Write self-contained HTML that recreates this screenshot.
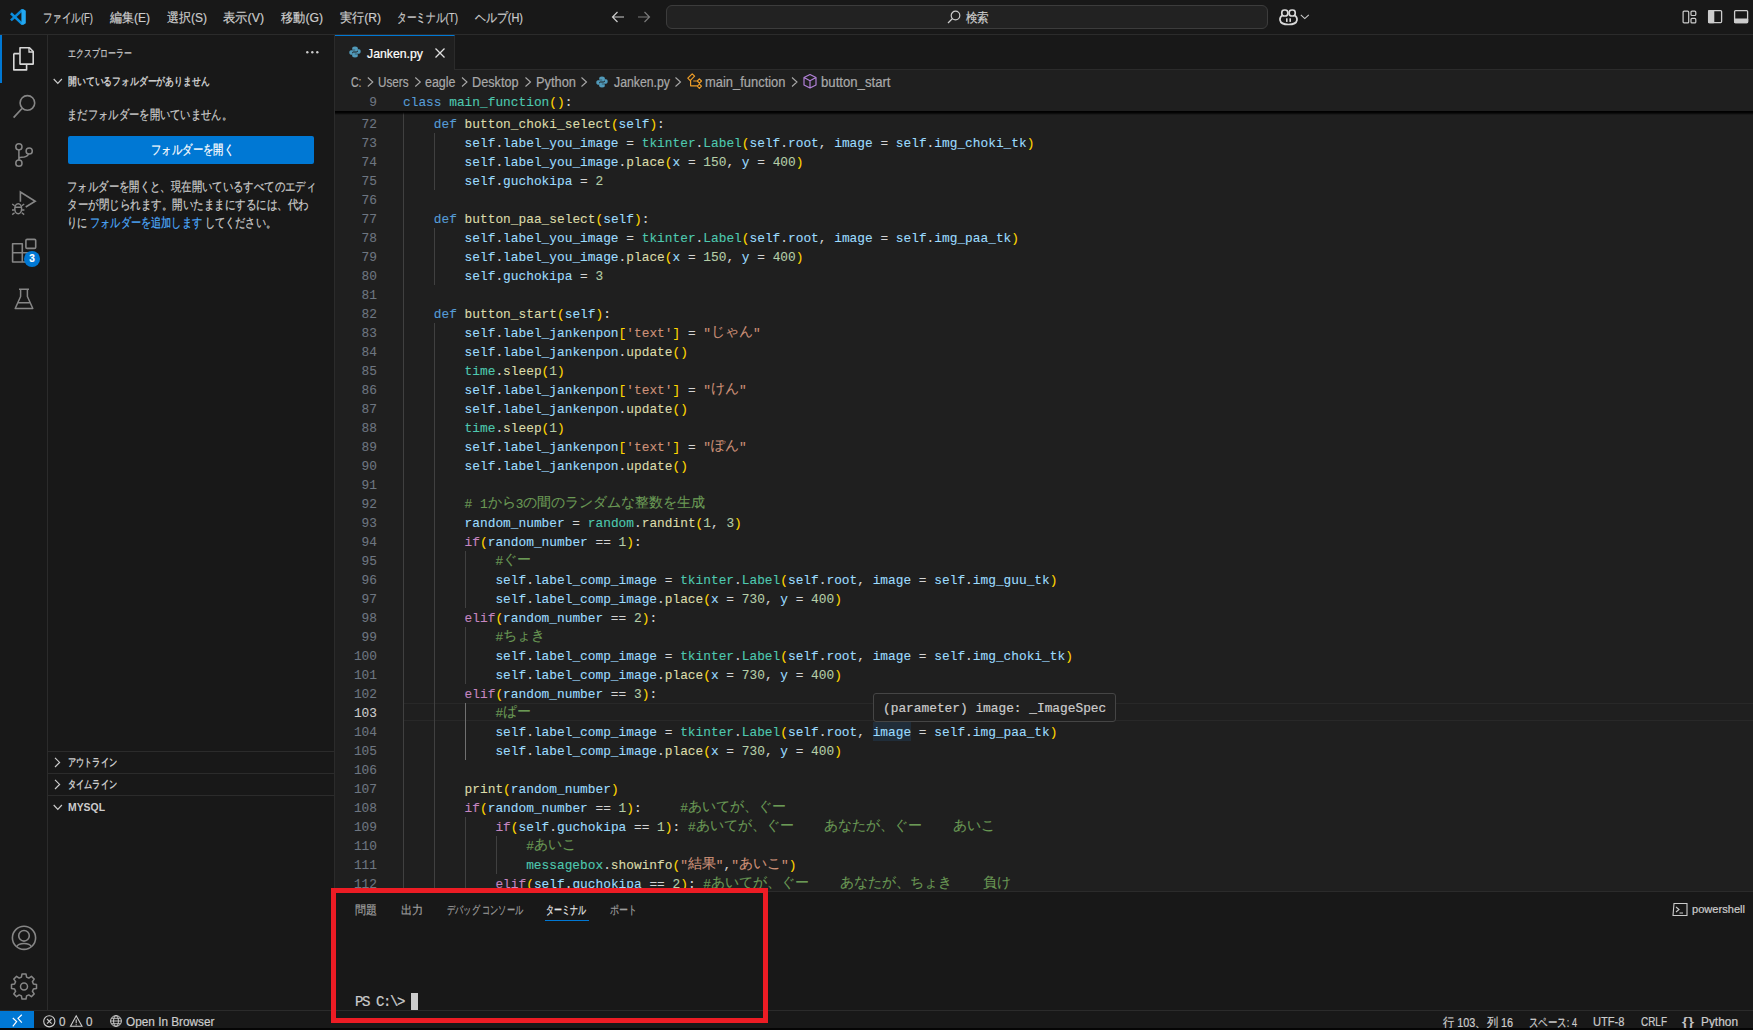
<!DOCTYPE html>
<html lang="ja">
<head>
<meta charset="utf-8">
<style>
*{box-sizing:border-box}
html,body{margin:0;padding:0;width:1753px;height:1030px;overflow:hidden;background:#181818;font-family:"Liberation Sans",sans-serif;color:#cccccc;-webkit-text-stroke:0.2px}
.a{position:absolute;white-space:pre}
#title{position:absolute;left:0;top:0;width:1753px;height:35px;background:#181818;border-bottom:1px solid #2b2b2b}
.menu{position:absolute;top:9px;font-size:13px;color:#cccccc}
#act{position:absolute;left:0;top:35px;width:48px;height:975px;background:#181818;border-right:1px solid #2b2b2b}
#side{position:absolute;left:48px;top:35px;width:287px;height:975px;background:#181818;border-right:1px solid #2b2b2b}
#tabs{position:absolute;left:335px;top:35px;width:1418px;height:35px;background:#181818;border-bottom:1px solid #2b2b2b}
#editor{position:absolute;left:335px;top:70px;width:1418px;height:821px;background:#1f1f1f;overflow:hidden}
.cl{position:absolute;left:403px;height:19px;line-height:19px;font-family:"Liberation Mono",monospace;font-size:12.83px;white-space:pre;color:#d4d4d4;-webkit-text-stroke:0.1px}
.ln{position:absolute;left:334px;width:43px;text-align:right;height:19px;line-height:19px;font-family:"Liberation Mono",monospace;font-size:12.83px;color:#6e7681;-webkit-text-stroke:0.1px}
.ln.cur{color:#cccccc}
.j{font-size:14px;position:relative;top:-1px}
.ig{position:absolute;width:1px;background:#404040}
.ig.act{background:#707070}
#panel{position:absolute;left:335px;top:891px;width:1418px;height:119px;background:#181818;border-top:1px solid #2b2b2b}
#status{position:absolute;left:0;top:1010px;width:1753px;height:20px;background:#181818;border-top:1px solid #2b2b2b}
.ptab{position:absolute;top:903px;font-size:11.5px;color:#9d9d9d}
.sb{position:absolute;top:1015px;font-size:12.5px;color:#cccccc}
.bc{position:absolute;top:74px;font-size:14px;color:#a9a9a9}
.sec{position:absolute;font-size:11px;font-weight:bold;color:#cccccc;-webkit-text-stroke:0}
svg{position:absolute;overflow:visible}
</style>
</head>
<body>
<!-- TITLE BAR -->
<div id="title"></div>
<svg style="left:0;top:0" width="34" height="34" viewBox="0 0 34 34">
  <path d="M21.4 10.8 L11.9 19.5" stroke="#0a87d6" stroke-width="2.6" stroke-linecap="square"/>
  <path d="M11.9 14.2 L21.4 23.2" stroke="#0b8fe0" stroke-width="2.6" stroke-linecap="square"/>
  <path d="M21.4 9.4 L23 9.1 L25.8 10.7 V23.3 L23 24.9 L21.4 24.6 Z" fill="#22a8f2"/>
</svg>
<div class="a menu" style="left:43px;transform:scaleX(0.7288);transform-origin:0 0">ファイル(F)</div>
<div class="a menu" style="left:110px;transform:scaleX(0.9229);transform-origin:0 0">編集(E)</div>
<div class="a menu" style="left:167px;transform:scaleX(0.9229);transform-origin:0 0">選択(S)</div>
<div class="a menu" style="left:223px;transform:scaleX(0.9459);transform-origin:0 0">表示(V)</div>
<div class="a menu" style="left:281px;transform:scaleX(0.9379);transform-origin:0 0">移動(G)</div>
<div class="a menu" style="left:340px;transform:scaleX(0.9308);transform-origin:0 0">実行(R)</div>
<div class="a menu" style="left:397px;transform:scaleX(0.7475);transform-origin:0 0">ターミナル(T)</div>
<div class="a menu" style="left:475px;transform:scaleX(0.8414);transform-origin:0 0">ヘルプ(H)</div>
<!-- nav arrows -->
<svg style="left:611px;top:10px" width="14" height="14" viewBox="0 0 14 14"><path d="M13 7 H1.5 M6.5 2 L1.5 7 L6.5 12" stroke="#cccccc" stroke-width="1.2" fill="none"/></svg>
<svg style="left:637px;top:10px" width="14" height="14" viewBox="0 0 14 14"><path d="M1 7 H12.5 M7.5 2 L12.5 7 L7.5 12" stroke="#7a7a7a" stroke-width="1.2" fill="none"/></svg>
<!-- search box -->
<div class="a" style="left:666px;top:5px;width:602px;height:24px;background:#222222;border:1px solid #3c3c3c;border-radius:6px"></div>
<svg style="left:947px;top:10px" width="14" height="14" viewBox="0 0 14 14"><circle cx="8.5" cy="5.5" r="4.3" stroke="#cccccc" stroke-width="1.2" fill="none"/><path d="M5.5 8.5 L1 13" stroke="#cccccc" stroke-width="1.3"/></svg>
<div class="a" style="left:966px;top:10px;font-size:12.5px;color:#cccccc;transform:scaleX(0.8846);transform-origin:0 0">検索</div>
<!-- copilot -->
<svg style="left:1279px;top:9px" width="19" height="16" viewBox="0 0 19 16">
  <path d="M3.2 6.5 C1.5 7.5 0.8 9 1 11 C1.5 14 4.5 15.5 9.5 15.5 C14.5 15.5 17.5 14 18 11 C18.2 9 17.5 7.5 15.8 6.5" fill="none" stroke="#d8d8d8" stroke-width="1.7"/>
  <rect x="2.8" y="1" width="6" height="6" rx="2.6" fill="none" stroke="#d8d8d8" stroke-width="1.7"/>
  <rect x="10.2" y="1" width="6" height="6" rx="2.6" fill="none" stroke="#d8d8d8" stroke-width="1.7"/>
  <rect x="7" y="9.3" width="1.6" height="3.6" fill="#d8d8d8"/><rect x="10.4" y="9.3" width="1.6" height="3.6" fill="#d8d8d8"/>
</svg>
<svg style="left:1300px;top:14px" width="10" height="6" viewBox="0 0 10 6"><path d="M0.8 0.8 L4.8 4.6 L8.8 0.8" stroke="#cccccc" stroke-width="1.1" fill="none"/></svg>
<!-- layout icons -->
<svg style="left:1682px;top:10px" width="15" height="14" viewBox="0 0 15 14"><rect x="1.1" y="1.2" width="5.6" height="11.7" rx="1" fill="none" stroke="#cccccc" stroke-width="1.2"/><rect x="9" y="1.2" width="4.8" height="4.3" rx="1" fill="none" stroke="#cccccc" stroke-width="1.2"/><rect x="9" y="8.4" width="4.8" height="4.5" rx="1" fill="none" stroke="#cccccc" stroke-width="1.2"/></svg>
<svg style="left:1707px;top:9px" width="16" height="15" viewBox="0 0 16 15"><rect x="1.6" y="1.6" width="13" height="12" rx="1" fill="none" stroke="#cccccc" stroke-width="1.3"/><rect x="1" y="1" width="6.3" height="13.2" rx="1" fill="#cccccc"/></svg>
<svg style="left:1733px;top:9px" width="16" height="15" viewBox="0 0 16 15"><rect x="1.6" y="1.6" width="13" height="12" rx="1" fill="none" stroke="#cccccc" stroke-width="1.3"/><rect x="1" y="9.5" width="14.2" height="4.8" rx="1" fill="#cccccc"/></svg>

<!-- ACTIVITY BAR -->
<div id="act"></div>
<div class="a" style="left:0;top:35px;width:2px;height:48px;background:#0078d4"></div>
<!-- explorer -->
<svg style="left:0;top:0" width="48" height="80" viewBox="0 0 48 80">
  <path d="M13.8 53.6 H19.5 M13.8 53.6 V69.9 H26.6 V65" fill="none" stroke="#d7d7d7" stroke-width="1.6" stroke-linejoin="round"/>
  <path d="M20 47.8 H29.5 L33.2 51.5 V64.1 H20 Z" fill="none" stroke="#d7d7d7" stroke-width="1.6" stroke-linejoin="round"/>
  <path d="M29 48 V52 H33" fill="none" stroke="#d7d7d7" stroke-width="1.3"/>
</svg>
<!-- search -->
<svg style="left:0;top:0" width="48" height="130" viewBox="0 0 48 130"><circle cx="27.4" cy="102.9" r="7.3" fill="none" stroke="#868686" stroke-width="1.6"/><path d="M22 108.5 L13.6 117.6" stroke="#868686" stroke-width="1.7"/></svg>
<!-- source control -->
<svg style="left:0;top:0" width="48" height="180" viewBox="0 0 48 180"><circle cx="18.9" cy="146.8" r="3.1" fill="none" stroke="#868686" stroke-width="1.5"/><circle cx="18.9" cy="163.2" r="3.1" fill="none" stroke="#868686" stroke-width="1.5"/><circle cx="29.2" cy="151" r="3.1" fill="none" stroke="#868686" stroke-width="1.5"/><path d="M18.9 149.9 V160.1 M28.5 154 C27.5 156.5 25 157.3 21.5 157.3 C20 157.3 18.9 158 18.9 159" fill="none" stroke="#868686" stroke-width="1.5"/></svg>
<!-- run debug -->
<svg style="left:0;top:0" width="48" height="230" viewBox="0 0 48 230"><path d="M20.4 201.8 V192 L35.2 201.2 L25.7 207" fill="none" stroke="#868686" stroke-width="1.6" stroke-linejoin="miter"/><ellipse cx="18.2" cy="208.8" rx="3.4" ry="5" fill="none" stroke="#868686" stroke-width="1.5"/><path d="M14.8 207.3 H21.6 M12.2 204 L14.6 205.8 M24.2 204 L21.8 205.8 M12 210 H14.6 M21.8 210 H24.4 M12.2 214.6 L14.6 212.8 M24.2 214.6 L21.8 212.8" stroke="#868686" stroke-width="1.4"/></svg>
<!-- extensions -->
<svg style="left:0;top:0" width="48" height="280" viewBox="0 0 48 280"><path d="M12.6 243.8 H22.3 V262 H12.6 Z M12.6 252.8 H31 M22.3 262 H30" fill="none" stroke="#868686" stroke-width="1.6" stroke-linejoin="round"/><rect x="25.9" y="239.4" width="9.8" height="9" rx="1.2" fill="none" stroke="#868686" stroke-width="1.6"/></svg>
<div class="a" style="left:24px;top:251px;width:16px;height:16px;border-radius:8px;background:#0078d4"></div>
<div class="a" style="left:24px;top:251px;width:16px;height:16px;color:#fff;font-size:10px;font-weight:bold;text-align:center;line-height:16px">3</div>
<!-- testing -->
<svg style="left:0;top:0" width="48" height="320" viewBox="0 0 48 320"><path d="M19 289.3 H29 M20.6 289.3 V296.5 L15.2 308.5 H32.8 L27.4 296.5 V289.3 M17.4 302.7 H30.6" fill="none" stroke="#868686" stroke-width="1.5" stroke-linejoin="round"/></svg>
<!-- account -->
<svg style="left:0;top:0" width="48" height="960" viewBox="0 0 48 960"><circle cx="24" cy="937.8" r="11.6" fill="none" stroke="#868686" stroke-width="1.6"/><circle cx="24" cy="935.8" r="5.3" fill="none" stroke="#868686" stroke-width="1.6"/><path d="M16.6 946.8 C18.5 942.3 29.5 942.3 31.4 946.8" fill="none" stroke="#868686" stroke-width="1.6"/></svg>
<!-- settings -->
<svg style="left:11px;top:973px" width="26" height="26" viewBox="0 0 26 26"><path d="M11 1 H15 L15.6 4.1 L17.8 5.1 L20.4 3.3 L23.2 6.1 L21.4 8.7 L22.4 10.9 L25.5 11.5 V15.5 L22.4 16.1 L21.4 18.3 L23.2 20.9 L20.4 23.7 L17.8 21.9 L15.6 22.9 L15 26 H11 L10.4 22.9 L8.2 21.9 L5.6 23.7 L2.8 20.9 L4.6 18.3 L3.6 16.1 L0.5 15.5 V11.5 L3.6 10.9 L4.6 8.7 L2.8 6.1 L5.6 3.3 L8.2 5.1 L10.4 4.1 Z" fill="none" stroke="#868686" stroke-width="1.5" stroke-linejoin="round"/><circle cx="13" cy="13.5" r="3.5" fill="none" stroke="#868686" stroke-width="1.5"/></svg>

<!-- SIDEBAR -->
<div id="side"></div>
<div class="a" style="left:68px;top:46px;font-size:11px;color:#cccccc;transform:scaleX(0.7216);transform-origin:0 0">エクスプローラー</div>
<svg style="left:306px;top:51px" width="13" height="3" viewBox="0 0 13 3"><circle cx="1.3" cy="1.3" r="1.2" fill="#cccccc"/><circle cx="6.3" cy="1.3" r="1.2" fill="#cccccc"/><circle cx="11.3" cy="1.3" r="1.2" fill="#cccccc"/></svg>
<svg style="left:53px;top:78px" width="10" height="7" viewBox="0 0 10 7"><path d="M0.7 1 L4.8 5.3 L8.9 1" stroke="#cccccc" stroke-width="1.2" fill="none"/></svg>
<div class="a sec" style="left:68px;top:74px;transform:scaleX(0.8040);transform-origin:0 0">開いているフォルダーがありません</div>
<div class="a" style="left:67px;top:106px;font-size:13px;color:#cccccc;transform:scaleX(0.7933);transform-origin:0 0">まだフォルダーを開いていません。</div>
<div class="a" style="left:68px;top:136px;width:246px;height:28px;background:#0078d4;border-radius:2px"></div>
<div class="a" style="left:151px;top:141px;font-size:13px;color:#ffffff;transform:scaleX(0.7981);transform-origin:0 0">フォルダーを開く</div>
<div class="a" style="left:67px;top:178px;font-size:13px;color:#cccccc;transform:scaleX(0.7981);transform-origin:0 0">フォルダーを開くと、現在開いているすべてのエディ</div>
<div class="a" style="left:67px;top:196px;font-size:13px;color:#cccccc;transform:scaleX(0.8077);transform-origin:0 0">ターが閉じられます。開いたままにするには、代わ</div>
<div class="a" style="left:67px;top:214px;font-size:13px;color:#cccccc;transform:scaleX(0.7820);transform-origin:0 0">りに <span style="color:#4daafc">フォルダーを追加します</span> してください。</div>
<!-- bottom sections -->
<div class="a" style="left:48px;top:751px;width:286px;height:1px;background:#2b2b2b"></div>
<svg style="left:54px;top:757px" width="8" height="11" viewBox="0 0 8 11"><path d="M1 0.8 L5.6 5.4 L1 10" stroke="#cccccc" stroke-width="1.2" fill="none"/></svg>
<div class="a sec" style="left:68px;top:755px;transform:scaleX(0.7424);transform-origin:0 0">アウトライン</div>
<div class="a" style="left:48px;top:773px;width:286px;height:1px;background:#2b2b2b"></div>
<svg style="left:54px;top:779px" width="8" height="11" viewBox="0 0 8 11"><path d="M1 0.8 L5.6 5.4 L1 10" stroke="#cccccc" stroke-width="1.2" fill="none"/></svg>
<div class="a sec" style="left:68px;top:777px;transform:scaleX(0.7424);transform-origin:0 0">タイムライン</div>
<div class="a" style="left:48px;top:795px;width:286px;height:1px;background:#2b2b2b"></div>
<svg style="left:53px;top:804px" width="10" height="7" viewBox="0 0 10 7"><path d="M0.7 1 L4.8 5.3 L8.9 1" stroke="#cccccc" stroke-width="1.2" fill="none"/></svg>
<div class="a sec" style="left:68px;top:801px;transform:scaleX(0.9457);transform-origin:0 0">MYSQL</div>

<!-- TABS -->
<div id="tabs"></div>
<div class="a" style="left:335px;top:35px;width:120px;height:35px;background:#1f1f1f;border-top:1px solid #0078d4;border-right:1px solid #2b2b2b"></div>
<svg style="left:349px;top:46px" width="12" height="12" viewBox="0 0 12 12"><path d="M6 0.5 C3.5 0.5 3.2 1.5 3.2 2.5 V3.8 H6.2 V4.3 H2 C0.8 4.3 0.3 5.3 0.3 6.5 C0.3 7.8 0.9 8.7 2 8.7 H3 V7.2 C3 6.2 3.8 5.5 4.7 5.5 H7.5 C8.3 5.5 8.9 4.9 8.9 4.1 V2.5 C8.9 1.4 8 0.5 6 0.5 Z" fill="#519aba"/><path d="M6 11.5 C8.5 11.5 8.8 10.5 8.8 9.5 V8.2 H5.8 V7.7 H10 C11.2 7.7 11.7 6.7 11.7 5.5 C11.7 4.2 11.1 3.3 10 3.3 H9 V4.8 C9 5.8 8.2 6.5 7.3 6.5 H4.5 C3.7 6.5 3.1 7.1 3.1 7.9 V9.5 C3.1 10.6 4 11.5 6 11.5 Z" fill="#519aba"/></svg>
<div class="a" style="left:367px;top:46px;font-size:13px;color:#ffffff;transform:scaleX(0.9449);transform-origin:0 0">Janken.py</div>
<svg style="left:435px;top:48px" width="10" height="10" viewBox="0 0 10 10"><path d="M0.5 0.5 L9.5 9.5 M9.5 0.5 L0.5 9.5" stroke="#e0e0e0" stroke-width="1.3"/></svg>

<!-- EDITOR -->
<div id="editor"></div>
<!-- breadcrumbs -->
<div class="a bc" style="left:351px;transform:scaleX(0.7500);transform-origin:0 0">C:</div>
<div class="a bc" style="left:378px;transform:scaleX(0.8342);transform-origin:0 0">Users</div>
<div class="a bc" style="left:425px;transform:scaleX(0.8901);transform-origin:0 0">eagle</div>
<div class="a bc" style="left:472px;transform:scaleX(0.9054);transform-origin:0 0">Desktop</div>
<div class="a bc" style="left:536px;transform:scaleX(0.9176);transform-origin:0 0">Python</div>
<div class="a bc" style="left:614px;transform:scaleX(0.8774);transform-origin:0 0">Janken.py</div>
<div class="a bc" style="left:705px;transform:scaleX(0.9235);transform-origin:0 0">main_function</div>
<div class="a bc" style="left:821px;transform:scaleX(0.9400);transform-origin:0 0">button_start</div>
<svg style="left:0;top:0" width="900" height="92" viewBox="0 0 900 92"><path d="M367.8 77.5 L372.8 82 L367.8 86.5 M415.3 77.5 L420.3 82 L415.3 86.5 M462 77.5 L467 82 L462 86.5 M525.5 77.5 L530.5 82 L525.5 86.5 M581.5 77.5 L586.5 82 L581.5 86.5 M675.5 77.5 L680.5 82 L675.5 86.5 M792 77.5 L797 82 L792 86.5" stroke="#a9a9a9" stroke-width="1.1" fill="none"/>
<path d="M687.8 78.2 L692.2 73.8 L694.6 76.2 L690.2 80.6 Z M697.3 81 L699.4 78.9 L701.5 81 L699.4 83.1 Z M697.3 86.2 L699.4 84.1 L701.5 86.2 L699.4 88.3 Z M690.6 80.2 V85.8 H697.3 M693.2 81 H697.3" stroke="#ee9d28" stroke-width="1.2" fill="none" stroke-linejoin="round"/>
<path d="M810 74.5 L816 77.5 V85 L810 88 L804 85 V77.5 Z M804 77.5 L810 80.8 L816 77.5 M810 80.8 V88" stroke="#b180d7" stroke-width="1.2" fill="none" stroke-linejoin="round"/>
</svg>
<svg style="left:596px;top:76px" width="12" height="12" viewBox="0 0 12 12"><path d="M6 0.5 C3.5 0.5 3.2 1.5 3.2 2.5 V3.8 H6.2 V4.3 H2 C0.8 4.3 0.3 5.3 0.3 6.5 C0.3 7.8 0.9 8.7 2 8.7 H3 V7.2 C3 6.2 3.8 5.5 4.7 5.5 H7.5 C8.3 5.5 8.9 4.9 8.9 4.1 V2.5 C8.9 1.4 8 0.5 6 0.5 Z" fill="#519aba"/><path d="M6 11.5 C8.5 11.5 8.8 10.5 8.8 9.5 V8.2 H5.8 V7.7 H10 C11.2 7.7 11.7 6.7 11.7 5.5 C11.7 4.2 11.1 3.3 10 3.3 H9 V4.8 C9 5.8 8.2 6.5 7.3 6.5 H4.5 C3.7 6.5 3.1 7.1 3.1 7.9 V9.5 C3.1 10.6 4 11.5 6 11.5 Z" fill="#519aba"/></svg>

<!-- current line -->
<div class="a" style="left:403px;top:703px;width:1350px;height:18px;border-top:1px solid #282828;border-bottom:1px solid #282828"></div>
<div class="ig" style="left:403px;top:112px;height:779px"></div><div class="ig" style="left:434px;top:133px;height:57px"></div><div class="ig" style="left:434px;top:228px;height:57px"></div><div class="ig" style="left:434px;top:323px;height:570px"></div><div class="ig" style="left:465px;top:551px;height:57px"></div><div class="ig" style="left:465px;top:627px;height:57px"></div><div class="ig" style="left:465px;top:817px;height:76px"></div><div class="ig act" style="left:465px;top:703px;height:57px"></div><div class="ig" style="left:496px;top:836px;height:38px"></div>
<!-- hover highlight on 'image' line 104 -->
<div class="a" style="left:873px;top:722px;width:38px;height:19px;background:rgba(38,79,120,0.3)"></div>
<div class="ln" style="top:115px">72</div><div class="ln" style="top:134px">73</div><div class="ln" style="top:153px">74</div><div class="ln" style="top:172px">75</div><div class="ln" style="top:191px">76</div><div class="ln" style="top:210px">77</div><div class="ln" style="top:229px">78</div><div class="ln" style="top:248px">79</div><div class="ln" style="top:267px">80</div><div class="ln" style="top:286px">81</div><div class="ln" style="top:305px">82</div><div class="ln" style="top:324px">83</div><div class="ln" style="top:343px">84</div><div class="ln" style="top:362px">85</div><div class="ln" style="top:381px">86</div><div class="ln" style="top:400px">87</div><div class="ln" style="top:419px">88</div><div class="ln" style="top:438px">89</div><div class="ln" style="top:457px">90</div><div class="ln" style="top:476px">91</div><div class="ln" style="top:495px">92</div><div class="ln" style="top:514px">93</div><div class="ln" style="top:533px">94</div><div class="ln" style="top:552px">95</div><div class="ln" style="top:571px">96</div><div class="ln" style="top:590px">97</div><div class="ln" style="top:609px">98</div><div class="ln" style="top:628px">99</div><div class="ln" style="top:647px">100</div><div class="ln" style="top:666px">101</div><div class="ln" style="top:685px">102</div><div class="ln cur" style="top:704px">103</div><div class="ln" style="top:723px">104</div><div class="ln" style="top:742px">105</div><div class="ln" style="top:761px">106</div><div class="ln" style="top:780px">107</div><div class="ln" style="top:799px">108</div><div class="ln" style="top:818px">109</div><div class="ln" style="top:837px">110</div><div class="ln" style="top:856px">111</div><div class="ln" style="top:875px">112</div>
<div class="cl" style="top:115px">    <span style="color:#569cd6">def</span> <span style="color:#dcdcaa">button_choki_select</span><span style="color:#ffd700">(</span><span style="color:#9cdcfe">self</span><span style="color:#ffd700">)</span><span style="color:#d4d4d4">:</span></div><div class="cl" style="top:134px">        <span style="color:#9cdcfe">self</span><span style="color:#d4d4d4">.</span><span style="color:#9cdcfe">label_you_image</span><span style="color:#d4d4d4"> = </span><span style="color:#4ec9b0">tkinter</span><span style="color:#d4d4d4">.</span><span style="color:#4ec9b0">Label</span><span style="color:#ffd700">(</span><span style="color:#9cdcfe">self</span><span style="color:#d4d4d4">.</span><span style="color:#9cdcfe">root</span><span style="color:#d4d4d4">, </span><span style="color:#9cdcfe">image</span><span style="color:#d4d4d4"> = </span><span style="color:#9cdcfe">self</span><span style="color:#d4d4d4">.</span><span style="color:#9cdcfe">img_choki_tk</span><span style="color:#ffd700">)</span></div><div class="cl" style="top:153px">        <span style="color:#9cdcfe">self</span><span style="color:#d4d4d4">.</span><span style="color:#9cdcfe">label_you_image</span><span style="color:#d4d4d4">.</span><span style="color:#dcdcaa">place</span><span style="color:#ffd700">(</span><span style="color:#9cdcfe">x</span><span style="color:#d4d4d4"> = </span><span style="color:#b5cea8">150</span><span style="color:#d4d4d4">, </span><span style="color:#9cdcfe">y</span><span style="color:#d4d4d4"> = </span><span style="color:#b5cea8">400</span><span style="color:#ffd700">)</span></div><div class="cl" style="top:172px">        <span style="color:#9cdcfe">self</span><span style="color:#d4d4d4">.</span><span style="color:#9cdcfe">guchokipa</span><span style="color:#d4d4d4"> = </span><span style="color:#b5cea8">2</span></div><div class="cl" style="top:191px"></div><div class="cl" style="top:210px">    <span style="color:#569cd6">def</span> <span style="color:#dcdcaa">button_paa_select</span><span style="color:#ffd700">(</span><span style="color:#9cdcfe">self</span><span style="color:#ffd700">)</span><span style="color:#d4d4d4">:</span></div><div class="cl" style="top:229px">        <span style="color:#9cdcfe">self</span><span style="color:#d4d4d4">.</span><span style="color:#9cdcfe">label_you_image</span><span style="color:#d4d4d4"> = </span><span style="color:#4ec9b0">tkinter</span><span style="color:#d4d4d4">.</span><span style="color:#4ec9b0">Label</span><span style="color:#ffd700">(</span><span style="color:#9cdcfe">self</span><span style="color:#d4d4d4">.</span><span style="color:#9cdcfe">root</span><span style="color:#d4d4d4">, </span><span style="color:#9cdcfe">image</span><span style="color:#d4d4d4"> = </span><span style="color:#9cdcfe">self</span><span style="color:#d4d4d4">.</span><span style="color:#9cdcfe">img_paa_tk</span><span style="color:#ffd700">)</span></div><div class="cl" style="top:248px">        <span style="color:#9cdcfe">self</span><span style="color:#d4d4d4">.</span><span style="color:#9cdcfe">label_you_image</span><span style="color:#d4d4d4">.</span><span style="color:#dcdcaa">place</span><span style="color:#ffd700">(</span><span style="color:#9cdcfe">x</span><span style="color:#d4d4d4"> = </span><span style="color:#b5cea8">150</span><span style="color:#d4d4d4">, </span><span style="color:#9cdcfe">y</span><span style="color:#d4d4d4"> = </span><span style="color:#b5cea8">400</span><span style="color:#ffd700">)</span></div><div class="cl" style="top:267px">        <span style="color:#9cdcfe">self</span><span style="color:#d4d4d4">.</span><span style="color:#9cdcfe">guchokipa</span><span style="color:#d4d4d4"> = </span><span style="color:#b5cea8">3</span></div><div class="cl" style="top:286px"></div><div class="cl" style="top:305px">    <span style="color:#569cd6">def</span> <span style="color:#dcdcaa">button_start</span><span style="color:#ffd700">(</span><span style="color:#9cdcfe">self</span><span style="color:#ffd700">)</span><span style="color:#d4d4d4">:</span></div><div class="cl" style="top:324px">        <span style="color:#9cdcfe">self</span><span style="color:#d4d4d4">.</span><span style="color:#9cdcfe">label_jankenpon</span><span style="color:#ffd700">[</span><span style="color:#ce9178">&#x27;text&#x27;</span><span style="color:#ffd700">]</span><span style="color:#d4d4d4"> = </span><span style="color:#ce9178">&quot;<span class="j">じゃん</span>&quot;</span></div><div class="cl" style="top:343px">        <span style="color:#9cdcfe">self</span><span style="color:#d4d4d4">.</span><span style="color:#9cdcfe">label_jankenpon</span><span style="color:#d4d4d4">.</span><span style="color:#dcdcaa">update</span><span style="color:#ffd700">(</span><span style="color:#ffd700">)</span></div><div class="cl" style="top:362px">        <span style="color:#4ec9b0">time</span><span style="color:#d4d4d4">.</span><span style="color:#dcdcaa">sleep</span><span style="color:#ffd700">(</span><span style="color:#b5cea8">1</span><span style="color:#ffd700">)</span></div><div class="cl" style="top:381px">        <span style="color:#9cdcfe">self</span><span style="color:#d4d4d4">.</span><span style="color:#9cdcfe">label_jankenpon</span><span style="color:#ffd700">[</span><span style="color:#ce9178">&#x27;text&#x27;</span><span style="color:#ffd700">]</span><span style="color:#d4d4d4"> = </span><span style="color:#ce9178">&quot;<span class="j">けん</span>&quot;</span></div><div class="cl" style="top:400px">        <span style="color:#9cdcfe">self</span><span style="color:#d4d4d4">.</span><span style="color:#9cdcfe">label_jankenpon</span><span style="color:#d4d4d4">.</span><span style="color:#dcdcaa">update</span><span style="color:#ffd700">(</span><span style="color:#ffd700">)</span></div><div class="cl" style="top:419px">        <span style="color:#4ec9b0">time</span><span style="color:#d4d4d4">.</span><span style="color:#dcdcaa">sleep</span><span style="color:#ffd700">(</span><span style="color:#b5cea8">1</span><span style="color:#ffd700">)</span></div><div class="cl" style="top:438px">        <span style="color:#9cdcfe">self</span><span style="color:#d4d4d4">.</span><span style="color:#9cdcfe">label_jankenpon</span><span style="color:#ffd700">[</span><span style="color:#ce9178">&#x27;text&#x27;</span><span style="color:#ffd700">]</span><span style="color:#d4d4d4"> = </span><span style="color:#ce9178">&quot;<span class="j">ぽん</span>&quot;</span></div><div class="cl" style="top:457px">        <span style="color:#9cdcfe">self</span><span style="color:#d4d4d4">.</span><span style="color:#9cdcfe">label_jankenpon</span><span style="color:#d4d4d4">.</span><span style="color:#dcdcaa">update</span><span style="color:#ffd700">(</span><span style="color:#ffd700">)</span></div><div class="cl" style="top:476px"></div><div class="cl" style="top:495px">        <span style="color:#6a9955"># 1<span class="j">から</span>3<span class="j">の間のランダムな整数を生成</span></span></div><div class="cl" style="top:514px">        <span style="color:#9cdcfe">random_number</span><span style="color:#d4d4d4"> = </span><span style="color:#4ec9b0">random</span><span style="color:#d4d4d4">.</span><span style="color:#dcdcaa">randint</span><span style="color:#ffd700">(</span><span style="color:#b5cea8">1</span><span style="color:#d4d4d4">, </span><span style="color:#b5cea8">3</span><span style="color:#ffd700">)</span></div><div class="cl" style="top:533px">        <span style="color:#c586c0">if</span><span style="color:#ffd700">(</span><span style="color:#9cdcfe">random_number</span><span style="color:#d4d4d4"> == </span><span style="color:#b5cea8">1</span><span style="color:#ffd700">)</span><span style="color:#d4d4d4">:</span></div><div class="cl" style="top:552px">            <span style="color:#6a9955">#<span class="j">ぐー</span></span></div><div class="cl" style="top:571px">            <span style="color:#9cdcfe">self</span><span style="color:#d4d4d4">.</span><span style="color:#9cdcfe">label_comp_image</span><span style="color:#d4d4d4"> = </span><span style="color:#4ec9b0">tkinter</span><span style="color:#d4d4d4">.</span><span style="color:#4ec9b0">Label</span><span style="color:#ffd700">(</span><span style="color:#9cdcfe">self</span><span style="color:#d4d4d4">.</span><span style="color:#9cdcfe">root</span><span style="color:#d4d4d4">, </span><span style="color:#9cdcfe">image</span><span style="color:#d4d4d4"> = </span><span style="color:#9cdcfe">self</span><span style="color:#d4d4d4">.</span><span style="color:#9cdcfe">img_guu_tk</span><span style="color:#ffd700">)</span></div><div class="cl" style="top:590px">            <span style="color:#9cdcfe">self</span><span style="color:#d4d4d4">.</span><span style="color:#9cdcfe">label_comp_image</span><span style="color:#d4d4d4">.</span><span style="color:#dcdcaa">place</span><span style="color:#ffd700">(</span><span style="color:#9cdcfe">x</span><span style="color:#d4d4d4"> = </span><span style="color:#b5cea8">730</span><span style="color:#d4d4d4">, </span><span style="color:#9cdcfe">y</span><span style="color:#d4d4d4"> = </span><span style="color:#b5cea8">400</span><span style="color:#ffd700">)</span></div><div class="cl" style="top:609px">        <span style="color:#c586c0">elif</span><span style="color:#ffd700">(</span><span style="color:#9cdcfe">random_number</span><span style="color:#d4d4d4"> == </span><span style="color:#b5cea8">2</span><span style="color:#ffd700">)</span><span style="color:#d4d4d4">:</span></div><div class="cl" style="top:628px">            <span style="color:#6a9955">#<span class="j">ちょき</span></span></div><div class="cl" style="top:647px">            <span style="color:#9cdcfe">self</span><span style="color:#d4d4d4">.</span><span style="color:#9cdcfe">label_comp_image</span><span style="color:#d4d4d4"> = </span><span style="color:#4ec9b0">tkinter</span><span style="color:#d4d4d4">.</span><span style="color:#4ec9b0">Label</span><span style="color:#ffd700">(</span><span style="color:#9cdcfe">self</span><span style="color:#d4d4d4">.</span><span style="color:#9cdcfe">root</span><span style="color:#d4d4d4">, </span><span style="color:#9cdcfe">image</span><span style="color:#d4d4d4"> = </span><span style="color:#9cdcfe">self</span><span style="color:#d4d4d4">.</span><span style="color:#9cdcfe">img_choki_tk</span><span style="color:#ffd700">)</span></div><div class="cl" style="top:666px">            <span style="color:#9cdcfe">self</span><span style="color:#d4d4d4">.</span><span style="color:#9cdcfe">label_comp_image</span><span style="color:#d4d4d4">.</span><span style="color:#dcdcaa">place</span><span style="color:#ffd700">(</span><span style="color:#9cdcfe">x</span><span style="color:#d4d4d4"> = </span><span style="color:#b5cea8">730</span><span style="color:#d4d4d4">, </span><span style="color:#9cdcfe">y</span><span style="color:#d4d4d4"> = </span><span style="color:#b5cea8">400</span><span style="color:#ffd700">)</span></div><div class="cl" style="top:685px">        <span style="color:#c586c0">elif</span><span style="color:#ffd700">(</span><span style="color:#9cdcfe">random_number</span><span style="color:#d4d4d4"> == </span><span style="color:#b5cea8">3</span><span style="color:#ffd700">)</span><span style="color:#d4d4d4">:</span></div><div class="cl" style="top:704px">            <span style="color:#6a9955">#<span class="j">ぱー</span></span></div><div class="cl" style="top:723px">            <span style="color:#9cdcfe">self</span><span style="color:#d4d4d4">.</span><span style="color:#9cdcfe">label_comp_image</span><span style="color:#d4d4d4"> = </span><span style="color:#4ec9b0">tkinter</span><span style="color:#d4d4d4">.</span><span style="color:#4ec9b0">Label</span><span style="color:#ffd700">(</span><span style="color:#9cdcfe">self</span><span style="color:#d4d4d4">.</span><span style="color:#9cdcfe">root</span><span style="color:#d4d4d4">, </span><span style="color:#9cdcfe">image</span><span style="color:#d4d4d4"> = </span><span style="color:#9cdcfe">self</span><span style="color:#d4d4d4">.</span><span style="color:#9cdcfe">img_paa_tk</span><span style="color:#ffd700">)</span></div><div class="cl" style="top:742px">            <span style="color:#9cdcfe">self</span><span style="color:#d4d4d4">.</span><span style="color:#9cdcfe">label_comp_image</span><span style="color:#d4d4d4">.</span><span style="color:#dcdcaa">place</span><span style="color:#ffd700">(</span><span style="color:#9cdcfe">x</span><span style="color:#d4d4d4"> = </span><span style="color:#b5cea8">730</span><span style="color:#d4d4d4">, </span><span style="color:#9cdcfe">y</span><span style="color:#d4d4d4"> = </span><span style="color:#b5cea8">400</span><span style="color:#ffd700">)</span></div><div class="cl" style="top:761px"></div><div class="cl" style="top:780px">        <span style="color:#dcdcaa">print</span><span style="color:#ffd700">(</span><span style="color:#9cdcfe">random_number</span><span style="color:#ffd700">)</span></div><div class="cl" style="top:799px">        <span style="color:#c586c0">if</span><span style="color:#ffd700">(</span><span style="color:#9cdcfe">random_number</span><span style="color:#d4d4d4"> == </span><span style="color:#b5cea8">1</span><span style="color:#ffd700">)</span><span style="color:#d4d4d4">:     </span><span style="color:#6a9955">#<span class="j">あいてが、ぐー</span></span></div><div class="cl" style="top:818px">            <span style="color:#c586c0">if</span><span style="color:#ffd700">(</span><span style="color:#9cdcfe">self</span><span style="color:#d4d4d4">.</span><span style="color:#9cdcfe">guchokipa</span><span style="color:#d4d4d4"> == </span><span style="color:#b5cea8">1</span><span style="color:#ffd700">)</span><span style="color:#d4d4d4">: </span><span style="color:#6a9955">#<span class="j">あいてが、ぐー</span>    <span class="j">あなたが、ぐー</span>    <span class="j">あいこ</span></span></div><div class="cl" style="top:837px">                <span style="color:#6a9955">#<span class="j">あいこ</span></span></div><div class="cl" style="top:856px">                <span style="color:#4ec9b0">messagebox</span><span style="color:#d4d4d4">.</span><span style="color:#dcdcaa">showinfo</span><span style="color:#ffd700">(</span><span style="color:#ce9178">&quot;<span class="j">結果</span>&quot;</span><span style="color:#d4d4d4">,</span><span style="color:#ce9178">&quot;<span class="j">あいこ</span>&quot;</span><span style="color:#ffd700">)</span></div><div class="cl" style="top:875px">            <span style="color:#c586c0">elif</span><span style="color:#ffd700">(</span><span style="color:#9cdcfe">self</span><span style="color:#d4d4d4">.</span><span style="color:#9cdcfe">guchokipa</span><span style="color:#d4d4d4"> == </span><span style="color:#b5cea8">2</span><span style="color:#ffd700">)</span><span style="color:#d4d4d4">: </span><span style="color:#6a9955">#<span class="j">あいてが、ぐー</span>    <span class="j">あなたが、ちょき</span>    <span class="j">負け</span></span></div>
<!-- sticky scroll -->
<div class="a" style="left:335px;top:92px;width:1418px;height:19px;background:#1f1f1f"></div>
<div class="a" style="left:335px;top:111px;width:1418px;height:4px;background:linear-gradient(rgba(0,0,0,1) 0%,rgba(0,0,0,0.85) 45%,rgba(0,0,0,0) 100%)"></div>
<div class="ln" style="top:93px">9</div>
<div class="cl" style="top:93px"><span style="color:#569cd6">class</span> <span style="color:#4ec9b0">main_function</span><span style="color:#ffd700">()</span><span style="color:#d4d4d4">:</span></div>

<!-- hover tooltip -->
<div class="a" style="left:873px;top:693px;width:243px;height:29px;background:#202020;border:1px solid #454545;border-radius:3px"></div>
<div class="a" style="left:883px;top:701px;font-family:'Liberation Mono',monospace;font-size:12.83px;color:#cccccc">(parameter) image: _ImageSpec</div>

<!-- PANEL -->
<div id="panel"></div>
<div class="a ptab" style="left:355px;transform:scaleX(0.9167);transform-origin:0 0">問題</div>
<div class="a ptab" style="left:401px;transform:scaleX(0.9375);transform-origin:0 0">出力</div>
<div class="a ptab" style="left:447px;transform:scaleX(0.6834);transform-origin:0 0">デバッグ コンソール</div>
<div class="a ptab" style="left:546px;color:#e7e7e7;transform:scaleX(0.6667);transform-origin:0 0">ターミナル</div>
<div class="a" style="left:545px;top:920px;width:44px;height:1px;background:#0078d4"></div>
<div class="a ptab" style="left:610px;transform:scaleX(0.7500);transform-origin:0 0">ポート</div>
<svg style="left:1672px;top:902px" width="16" height="15" viewBox="0 0 16 15"><path d="M2 1.5 H15 V13.5 H1 Z" fill="none" stroke="#cccccc" stroke-width="1.1"/><path d="M4 5 L7 7.5 L4 10 M7.5 11 H11" stroke="#cccccc" stroke-width="1.1" fill="none"/></svg>
<div class="a" style="left:1692px;top:903px;font-size:11px;color:#cccccc;transform:scaleX(1.0077);transform-origin:0 0">powershell</div>
<div class="a" style="left:355px;top:994px;font-family:'Liberation Mono',monospace;font-size:14px;letter-spacing:-1.4px;color:#cccccc">PS C:\&gt; </div>
<div class="a" style="left:411px;top:993px;width:7px;height:17px;background:#cccccc"></div>

<!-- STATUS BAR -->
<div id="status"></div>
<div class="a" style="left:0;top:1011px;width:34px;height:17px;background:#0078d4"></div>
<svg style="left:12px;top:1014px" width="11" height="13" viewBox="0 0 11 13"><path d="M0.8 4 L4.6 7.6 L0.8 12.4 M9.8 0.8 L6 4.4 L9.8 8.6" stroke="#ffffff" stroke-width="1.2" fill="none"/></svg>
<svg style="left:43px;top:1015px" width="13" height="13" viewBox="0 0 13 13"><circle cx="6.3" cy="6.3" r="5.6" fill="none" stroke="#cccccc" stroke-width="1.1"/><path d="M4 4 L8.6 8.6 M8.6 4 L4 8.6" stroke="#cccccc" stroke-width="1.1"/></svg>
<div class="sb a" style="left:59px;transform:scaleX(0.9348);transform-origin:0 0">0</div>
<svg style="left:70px;top:1015px" width="13" height="12" viewBox="0 0 13 12"><path d="M6.2 0.8 L12 11.3 H0.5 Z M6.2 4.5 V8.2 M6.2 9.2 V10.3" stroke="#cccccc" stroke-width="1.1" fill="none"/></svg>
<div class="sb a" style="left:86px;transform:scaleX(0.9348);transform-origin:0 0">0</div>
<svg style="left:110px;top:1015px" width="12" height="12" viewBox="0 0 12 12"><circle cx="6" cy="6" r="5.4" fill="none" stroke="#cccccc" stroke-width="1"/><ellipse cx="6" cy="6" rx="2.4" ry="5.4" fill="none" stroke="#cccccc" stroke-width="1"/><path d="M0.7 6 H11.3 M1.5 3.3 H10.5 M1.5 8.7 H10.5" stroke="#cccccc" stroke-width="0.9"/></svg>
<div class="sb a" style="left:126px;transform:scaleX(0.9435);transform-origin:0 0">Open In Browser</div>
<div class="sb a" style="left:1443px;transform:scaleX(0.8672);transform-origin:0 0">行 103、列 16</div>
<div class="sb a" style="left:1529px;transform:scaleX(0.7283);transform-origin:0 0">スペース: 4</div>
<div class="sb a" style="left:1593px;transform:scaleX(0.8893);transform-origin:0 0">UTF-8</div>
<div class="sb a" style="left:1641px;transform:scaleX(0.7962);transform-origin:0 0">CRLF</div>
<div class="sb a" style="left:1682px;transform:scaleX(1.4355);transform-origin:0 0">{}</div>
<div class="sb a" style="left:1701px;transform:scaleX(0.9506);transform-origin:0 0">Python</div>
<div class="a" style="left:0;top:1028px;width:1753px;height:2px;background:#050505"></div>

<!-- RED ANNOTATION BOX -->
<div class="a" style="left:331px;top:888px;width:437px;height:135px;border:5px solid #ec1c24"></div>
</body>
</html>
